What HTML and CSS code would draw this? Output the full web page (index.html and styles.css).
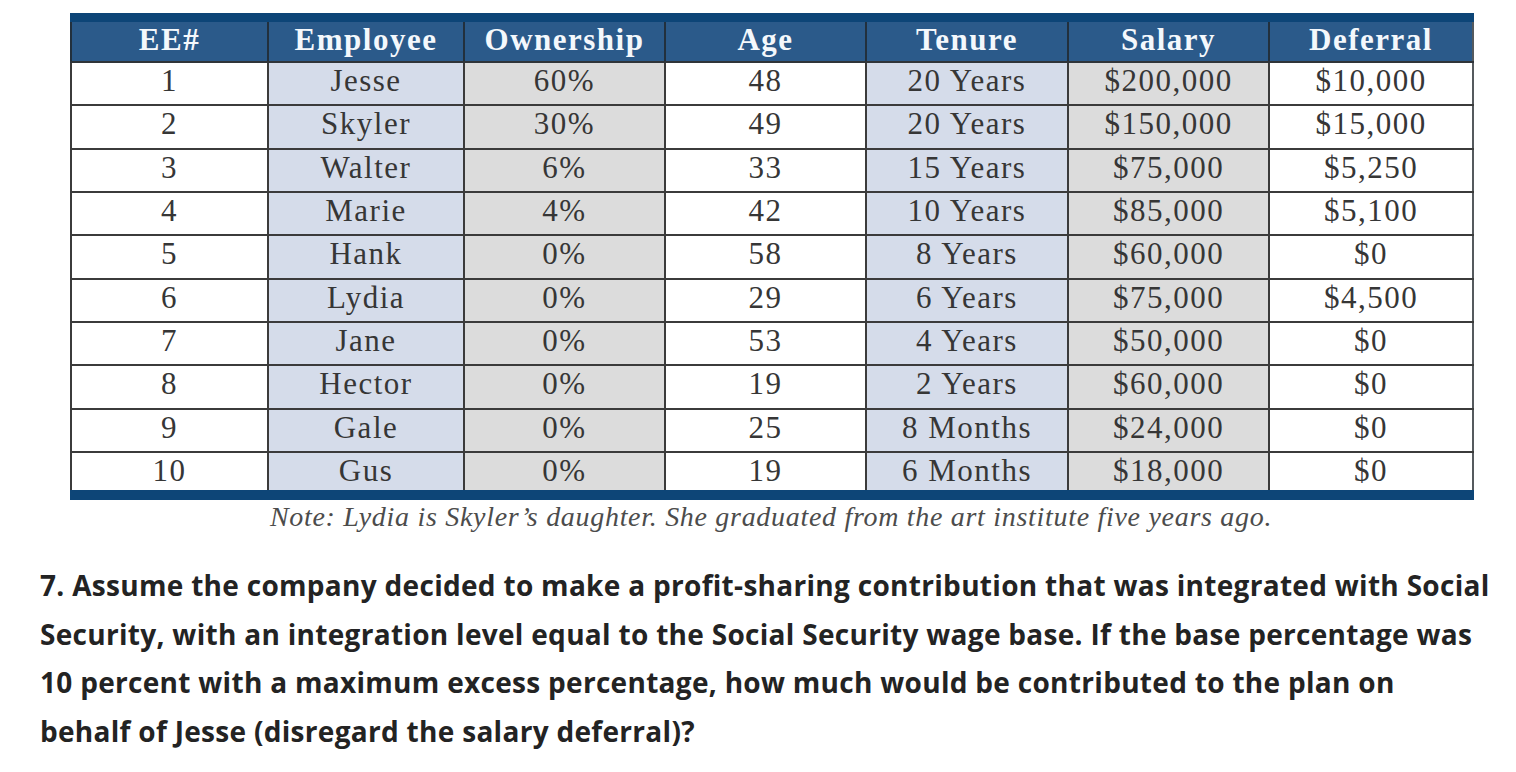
FILE: index.html
```html
<!DOCTYPE html>
<html lang="en">
<head>
<meta charset="utf-8">
<title>Employee table</title>
<link rel="stylesheet" href="styles.css">
</head>
<body>
<div class="page">
  <div class="figure">
    <table class="emp">
      <colgroup>
        <col class="c1"><col class="c2"><col class="c3"><col class="c4"><col class="c5"><col class="c6"><col class="c7">
      </colgroup>
      <thead>
        <tr><th>EE#</th><th>Employee</th><th>Ownership</th><th>Age</th><th>Tenure</th><th>Salary</th><th>Deferral</th></tr>
      </thead>
      <tbody>
        <tr><td>1</td><td class="blue">Jesse</td><td class="gray">60%</td><td>48</td><td class="blue">20 Years</td><td class="gray">$200,000</td><td>$10,000</td></tr>
        <tr><td>2</td><td class="blue">Skyler</td><td class="gray">30%</td><td>49</td><td class="blue">20 Years</td><td class="gray">$150,000</td><td>$15,000</td></tr>
        <tr><td>3</td><td class="blue">Walter</td><td class="gray">6%</td><td>33</td><td class="blue">15 Years</td><td class="gray">$75,000</td><td>$5,250</td></tr>
        <tr><td>4</td><td class="blue">Marie</td><td class="gray">4%</td><td>42</td><td class="blue">10 Years</td><td class="gray">$85,000</td><td>$5,100</td></tr>
        <tr><td>5</td><td class="blue">Hank</td><td class="gray">0%</td><td>58</td><td class="blue">8 Years</td><td class="gray">$60,000</td><td>$0</td></tr>
        <tr><td>6</td><td class="blue">Lydia</td><td class="gray">0%</td><td>29</td><td class="blue">6 Years</td><td class="gray">$75,000</td><td>$4,500</td></tr>
        <tr><td>7</td><td class="blue">Jane</td><td class="gray">0%</td><td>53</td><td class="blue">4 Years</td><td class="gray">$50,000</td><td>$0</td></tr>
        <tr><td>8</td><td class="blue">Hector</td><td class="gray">0%</td><td>19</td><td class="blue">2 Years</td><td class="gray">$60,000</td><td>$0</td></tr>
        <tr><td>9</td><td class="blue">Gale</td><td class="gray">0%</td><td>25</td><td class="blue">8 Months</td><td class="gray">$24,000</td><td>$0</td></tr>
        <tr><td>10</td><td class="blue">Gus</td><td class="gray">0%</td><td>19</td><td class="blue">6 Months</td><td class="gray">$18,000</td><td>$0</td></tr>
      </tbody>
    </table>
    <p class="note">Note: Lydia is Skyler’s daughter. She graduated from the art institute five years ago.</p>
  </div>
  <p class="question">7. Assume the company decided to make a profit-sharing contribution that was integrated with Social<br>Security, with an integration level equal to the Social Security wage base. If the base percentage was<br>10 percent with a maximum excess percentage, how much would be contributed to the plan on<br>behalf of Jesse (disregard the salary deferral)?</p>
</div>
</body>
</html>
```

FILE: styles.css
```css
html, body {
  margin: 0;
  padding: 0;
  background: #ffffff;
}

.page {
  padding-top: 13px;
}

.figure {
  margin-left: 70px;
  width: 1402px;
}

.emp {
  width: 1402px;
  border-collapse: collapse;
  table-layout: fixed;
  font-family: "Liberation Serif", "Times New Roman", serif;
  font-size: 31px;
  letter-spacing: 1.5px;
  color: #363636;
}

.c1 { width: 197px; }
.c2 { width: 196px; }
.c3 { width: 201px; }
.c4 { width: 201px; }
.c5 { width: 202px; }
.c6 { width: 201px; }
.c7 { width: 204px; }

.emp thead tr {
  border-top: 9px solid #0d4577;
}

.emp th {
  height: 39px;
  padding: 0;
  background: #2b5a8a;
  color: #f4f8fc;
  font-weight: bold;
  letter-spacing: 1.5px;
  text-align: center;
  border-left: 2px solid #22303d;
  border-right: 2px solid #22303d;
  border-bottom: 2px solid #2f3439;
  line-height: 36px;
  vertical-align: top;
}

.emp td {
  height: 41.35px;
  padding: 0;
  text-align: center;
  border: 2px solid #3b3b3b;
  line-height: 36px;
  vertical-align: top;
  background: #ffffff;
}

.emp td.blue {
  background: #d5dcea;
}

.emp td.gray {
  background: #dcdcdc;
}

.emp tbody tr:last-child td {
  height: 37px;
  border-bottom: 10px solid #0d4577;
}

.emp td:last-child,
.emp th:last-child {
  border-right: 2px solid #555a5e;
}

.note {
  margin: 2px 0 0;
  text-align: center;
  font-family: "Liberation Serif", "Times New Roman", serif;
  font-style: italic;
  font-size: 28px;
  letter-spacing: 0.7px;
  color: #4c4c4c;
  line-height: 30px;
}

.question {
  margin: 29px 0 0 40px;
  font-family: "Open Sans", Lato, sans-serif;
  font-weight: bold;
  font-size: 28px;
  letter-spacing: 0.3px;
  line-height: 48.5px;
  color: #232323;
  white-space: nowrap;
}
```
